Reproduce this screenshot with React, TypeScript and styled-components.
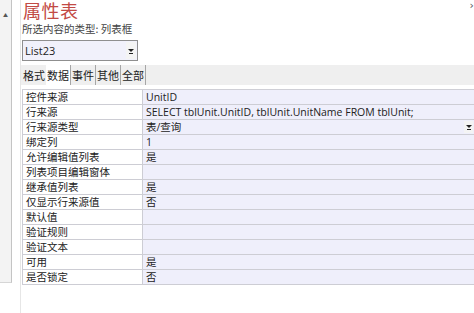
import React from "react";
import styled, { createGlobalStyle } from "styled-components";

const GlobalStyle = createGlobalStyle`
  html, body {
    margin: 0;
    padding: 0;
    background: #ffffff;
    font-family: "Noto Sans CJK SC", "Noto Sans", sans-serif;
    overflow: hidden;
  }
`;

const rows: { label: string; value: string; dropdown?: boolean }[] = [
  { label: "控件来源", value: "UnitID" },
  { label: "行来源", value: "SELECT tblUnit.UnitID, tblUnit.UnitName FROM tblUnit;" },
  { label: "行来源类型", value: "表/查询", dropdown: true },
  { label: "绑定列", value: "1" },
  { label: "允许编辑值列表", value: "是" },
  { label: "列表项目编辑窗体", value: "" },
  { label: "继承值列表", value: "是" },
  { label: "仅显示行来源值", value: "否" },
  { label: "默认值", value: "" },
  { label: "验证规则", value: "" },
  { label: "验证文本", value: "" },
  { label: "可用", value: "是" },
  { label: "是否锁定", value: "否" },
];

const tabs = ["格式", "数据", "事件", "其他", "全部"];

const App: React.FC = () => {
  return (
    <>
      <GlobalStyle />
      <Root>
        <ScrollBar>
          <ScrollArrow>▲</ScrollArrow>
        </ScrollBar>
        <Gutter />
        <Panel>
          <CloseMark>›</CloseMark>
          <Title>属性表</Title>
          <Subtitle>所选内容的类型: 列表框</Subtitle>
          <Picker>
            <PickerText>List23</PickerText>
            <PickerButton>
              <Caret />
            </PickerButton>
          </Picker>
          <TabStrip>
            {tabs.map((t) => (
              <Tab key={t} active={t === "数据"}>
                {t}
              </Tab>
            ))}
          </TabStrip>
          <Grid>
            {rows.map((r) => (
              <Row key={r.label}>
                <LabelCell>{r.label}</LabelCell>
                <ValueCell>
                  {r.value}
                  {r.dropdown && (
                    <CellButton>
                      <Caret />
                    </CellButton>
                  )}
                </ValueCell>
              </Row>
            ))}
          </Grid>
        </Panel>
      </Root>
    </>
  );
};

const Root = styled.div`
  display: flex;
  width: 474px;
  height: 313px;
`;

const ScrollBar = styled.div`
  width: 12px;
  height: 283px;
  background: #f3f3f3;
  border-right: 1px solid #c4c4c4;
  border-bottom: 1px solid #d6d6d6;
  display: flex;
  justify-content: center;
  box-sizing: border-box;
`;

const ScrollArrow = styled.div`
  font-size: 5px;
  color: #555;
  margin-top: 12px;
  line-height: 6px;
`;

const Gutter = styled.div`
  width: 8px;
  border-right: 1px solid #e6e6e6;
`;

const Panel = styled.div`
  position: relative;
  flex: 1;
  display: flex;
  flex-direction: column;
  padding-left: 1px;
`;

const CloseMark = styled.div`
  position: absolute;
  right: 0;
  top: 0;
  font-size: 11px;
  line-height: 11px;
  color: #555;
  font-family: "DejaVu Sans", sans-serif;
`;

const Title = styled.div`
  font-size: 18px;
  line-height: 21px;
  height: 21px;
  color: #c24a45;
  padding-left: 1px;
  letter-spacing: 0.5px;
`;

const Subtitle = styled.div`
  font-size: 10.5px;
  line-height: 15px;
  height: 16px;
  color: #444;
`;

const Picker = styled.div`
  width: 116px;
  height: 21px;
  box-sizing: border-box;
  border: 1px solid #8f8f8f;
  background: #f1f1fb;
  display: flex;
  align-items: center;
  margin-top: 3px;
`;

const PickerText = styled.div`
  flex: 1;
  font-family: "Open Sans", "Noto Sans", sans-serif;
  font-size: 11px;
  color: #222;
  padding-left: 2px;
`;

const PickerButton = styled.div`
  width: 10px;
  height: 17px;
  margin-right: 1px;
  background: #f4f4f4;
  display: flex;
  align-items: center;
  justify-content: center;
`;

const Caret = styled.div`
  width: 0;
  height: 0;
  border-left: 3px solid transparent;
  border-right: 3px solid transparent;
  border-top: 3px solid #222;
  border-bottom: 1px solid transparent;
  box-shadow: 0 2px 0 -1px #222;
`;

const TabStrip = styled.div`
  margin-top: 4px;
  margin-left: -1px;
  height: 20px;
  background: #efefef;
  display: flex;
  align-items: stretch;
  padding-left: 1px;
`;

const Tab = styled.div<{ active?: boolean }>`
  font-size: 11px;
  line-height: 20px;
  padding: 0 1px;
  color: #222;
  background: ${(p) => (p.active ? "#ffffff" : "transparent")};
  border-right: 1px solid #a6a6a6;
  &:first-child {
    border-right: none;
  }
`;

const Grid = styled.div`
  margin-top: 4px;
  border-top: 1px solid #cfcfd6;
  display: flex;
  flex-direction: column;
`;

const Row = styled.div`
  display: grid;
  grid-template-columns: 121px 1fr;
  height: 15px;
  border-bottom: 1px solid #cdcdd4;
  box-sizing: border-box;
  font-size: 10.5px;
  line-height: 14px;
  color: #222;
`;

const LabelCell = styled.div`
  background: #ffffff;
  border-left: 1px solid #cdcdd4;
  border-right: 1px solid #cdcdd4;
  padding-left: 3px;
  white-space: nowrap;
  overflow: hidden;
`;

const ValueCell = styled.div`
  position: relative;
  background: #efeffb;
  padding-left: 3px;
  font-family: "Open Sans", "Noto Sans", "Noto Sans CJK SC", sans-serif;
  white-space: nowrap;
  overflow: hidden;
`;

const CellButton = styled.div`
  position: absolute;
  right: 1px;
  top: 1px;
  width: 9px;
  height: 12px;
  background: #f4f4f4;
  display: flex;
  align-items: center;
  justify-content: center;
`;

export default App;
